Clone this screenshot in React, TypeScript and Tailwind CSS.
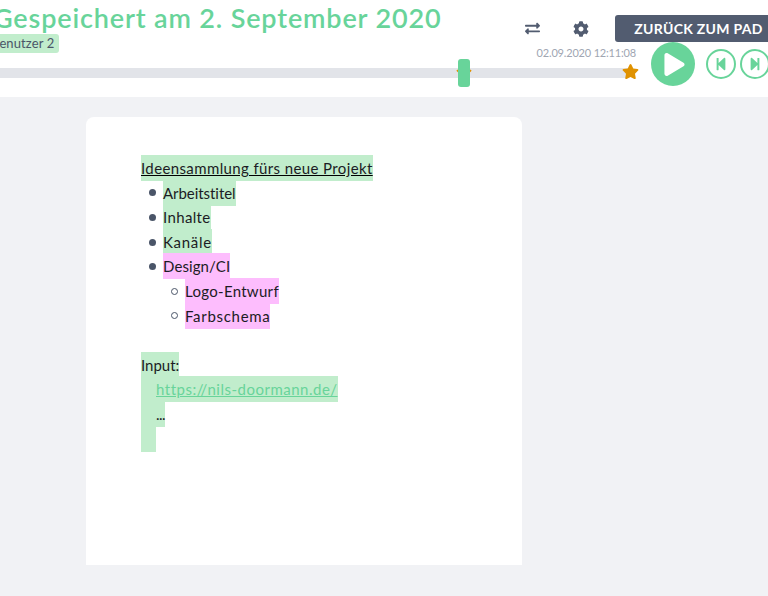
import React from 'react';
import { FaCog, FaExchangeAlt, FaPlay, FaStar, FaStepBackward, FaStepForward } from 'react-icons/fa';

const FONT = 'font-["Lato","Noto_Sans",sans-serif]';

const Line: React.FC<{ children?: React.ReactNode; className?: string }> = ({ children, className }) => (
  <div className={`-mb-[1.4px] h-[26px] w-fit leading-[26.6px] whitespace-nowrap ${className || ''}`}>{children}</div>
);

const Bullet: React.FC<{ label: string; color: string; spacing: string; sub?: boolean }> = ({ label, color, spacing, sub }) => (
  <div className={`flex items-center ${sub ? 'pl-[30px]' : 'pl-[8px]'}`}>
    <span
      className={`mt-[2px] mr-[9px] h-[7px] w-[7px] rounded-full ${sub ? 'border border-[#4a5568] bg-white' : 'bg-[#4a5568]'}`}
    ></span>
    <Line className={`${color} -ml-[2px] ${spacing}`}>{label}</Line>
  </div>
);

export default function App() {
  const green = 'bg-[#c1edcc]';
  const pink = 'bg-[#fdbdfd]';

  return (
    <div className={`h-[596px] w-[768px] overflow-hidden bg-[#f1f2f5] ${FONT}`}>
      {/* Header */}
      <header className="h-[97px] bg-white">
        <div className="flex h-[42px] justify-between">
          <div className="-ml-[7px]">
            <h1 className="mt-[2px] h-[32px] text-[27px] leading-[32px] font-semibold tracking-[0.85px] whitespace-nowrap text-[#68d49a]">
              Gespeichert am 2. September 2020
            </h1>
            <span className="-ml-[2px] block w-fit rounded-[3px] bg-[#c1edcc] pr-[5px] text-[13px] leading-[19px] tracking-[0.1px] text-[#4a5568]">
              Benutzer 2
            </span>
          </div>
          <div className="flex items-center pt-[15px] text-[#525c70]">
            <FaExchangeAlt className="text-[15px]" />
            <FaCog className="ml-[33px] text-[16px]" />
            <button className="-mr-[6px] ml-[26px] h-[27px] w-[159px] rounded-[3px] bg-[#525c70] pl-[8px] text-[14px] font-bold tracking-[0.3px] text-white">
              ZURÜCK ZUM PAD
            </button>
          </div>
        </div>

        <div className="flex h-[44px] items-center">
          <div className="relative mt-[18px] h-[10px] w-[628px] shrink-0 bg-[#e2e4e9]">
            <FaStar className="absolute top-[-4px] left-[456px] text-[16px] text-[#e09200]" />
            <span className="absolute top-[-9px] left-[458px] h-[28px] w-[12px] rounded-[3px] bg-[#68d49a]"></span>
            <FaStar className="absolute top-[-5px] left-[622px] text-[17px] text-[#e09200]" />
            <span className="absolute top-[-22px] right-[-8px] text-[11px] leading-[13px] tracking-[-0.18px] whitespace-nowrap text-[#a0a6b2]">
              02.09.2020 12:11:08
            </span>
          </div>
          <button className="ml-[23px] flex h-[44px] w-[44px] shrink-0 items-center justify-center rounded-full bg-[#68d49a] pl-[3px] text-[23px] text-white">
            <FaPlay />
          </button>
          <button className="ml-[11px] flex h-[30px] w-[30px] shrink-0 items-center justify-center rounded-full border-2 border-[#68d49a] text-[14px] text-[#68d49a]">
            <FaStepBackward />
          </button>
          <button className="ml-[4px] flex h-[30px] w-[30px] shrink-0 items-center justify-center rounded-full border-2 border-[#68d49a] text-[14px] text-[#68d49a]">
            <FaStepForward />
          </button>
        </div>
      </header>

      {/* Pad content */}
      <main className="pt-[20px] pl-[86px]">
        <div className="h-[448px] w-[436px] rounded-t-[8px] bg-white pt-[38px] pl-[55px] text-[15px] text-[#1c1c24]">
          <Line className={`${green} tracking-[0.38px] underline decoration-black`}>Ideensammlung fürs neue Projekt</Line>
          <Bullet label="Arbeitstitel" color={green} spacing="tracking-[-0.05px]" />
          <Bullet label="Inhalte" color={green} spacing="tracking-[0.35px]" />
          <Bullet label="Kanäle" color={green} spacing="tracking-[0.7px]" />
          <Bullet label="Design/CI" color={pink} spacing="tracking-[0.1px]" />
          <Bullet label="Logo-Entwurf" color={pink} spacing="tracking-[0.3px]" sub />
          <Bullet label="Farbschema" color={pink} spacing="tracking-[0.7px]" sub />
          <Line />
          <Line className={green}>Input:</Line>
          <Line className={`${green} pl-[15px]`}>
            <a className="tracking-[0.5px] text-[#68d49a] underline">https://nils-doormann.de/</a>
          </Line>
          <Line className={`${green} pl-[15px] tracking-[-0.6px]`}>...</Line>
          <Line className={`${green} pl-[15px]`} />
        </div>
      </main>
    </div>
  );
}
